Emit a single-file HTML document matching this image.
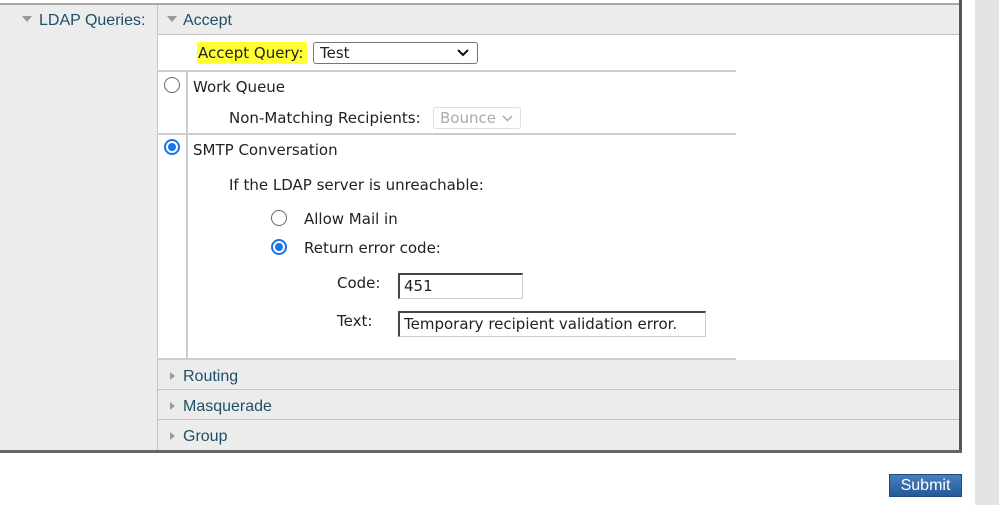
<!DOCTYPE html>
<html><head><meta charset="utf-8"><style>
*{margin:0;padding:0;box-sizing:border-box}
body{width:999px;height:505px;background:#fff;position:relative;overflow:hidden;font-family:"DejaVu Sans","Liberation Sans",sans-serif;font-size:15px;color:#222}
.a{position:absolute;white-space:nowrap}
.hdr{position:absolute;left:158px;width:801px;background:#ececec;border-bottom:1px solid #c4c4c4;color:#1f4f66;font-family:"Liberation Sans",sans-serif;font-size:16px}
.tri{display:inline-block;width:0;height:0;border-top:4px solid transparent;border-bottom:4px solid transparent;border-left:5px solid #999;margin:0 8px 0 12px;vertical-align:1px}
.rad{position:absolute;width:16px;height:16px;border-radius:50%;border:1px solid #666;background:#fff}
.rad.on{border:2px solid #1a73e8}
.rad.on::after{content:"";position:absolute;left:2px;top:2px;width:8px;height:8px;border-radius:50%;background:#1a73e8}
.inp{position:absolute;border:1px solid #ccc;border-top:2px solid #444;border-left:2px solid #444;background:#fff;padding-left:4px;font-size:15px;line-height:22px}
</style></head><body>
<div class="a" style="left:0;top:3px;width:961px;height:2px;background:#a8a8a8"></div>
<div class="a" style="left:0;top:5px;width:157px;height:446px;background:#ececec"></div>
<div class="a" style="left:157px;top:5px;width:1px;height:446px;background:#c4c4c4"></div>
<div class="a" style="left:959px;top:0;width:3px;height:453px;background:#555"></div>
<div class="a" style="left:0;top:450px;width:962px;height:3px;background:#666"></div>
<div class="a" style="left:975px;top:0;width:24px;height:505px;background:#e3e3e3"></div>
<div class="a" style="left:22px;top:12px;color:#1f4f66;font-family:'Liberation Sans',sans-serif;font-size:16px"><span style="display:inline-block;border-left:5px solid transparent;border-right:5px solid transparent;border-top:6px solid #999;margin-right:7px;vertical-align:3px"></span>LDAP Queries:</div>
<div class="hdr" style="top:5px;height:30px;line-height:32px"><span class="tri" style="border:none;border-left:5px solid transparent;border-right:5px solid transparent;border-top:6px solid #999;margin:0 6px 0 9px;vertical-align:3px"></span>Accept</div>
<div class="a" style="left:197px;top:42px;width:110px;height:22px;background:#ffff33"></div>
<div class="a" style="left:198px;top:44px">Accept Query:</div>
<div class="a" style="left:313px;top:42px;width:165px;height:22px;border:1px solid #767676;border-radius:3px;padding-left:6px;line-height:20px">Test<svg style="position:absolute;right:8px;top:6px" width="12" height="8"><path d="M1 1l5 5 5-5" fill="none" stroke="#111" stroke-width="2"/></svg></div>
<div class="a" style="left:158px;top:70px;width:578px;height:2px;background:#ccc"></div>
<div class="a" style="left:186px;top:72px;width:2px;height:287px;background:#ccc"></div>
<div class="rad" style="left:164px;top:77px"></div>
<div class="a" style="left:193px;top:78px">Work Queue</div>
<div class="a" style="left:229px;top:109px">Non-Matching Recipients:</div>
<div class="a" style="left:433px;top:107px;width:88px;height:22px;border:1px solid #e0e0e0;border-radius:3px;padding-left:6px;line-height:20px;color:#aaa">Bounce<svg style="position:absolute;right:7px;top:7px" width="11" height="7"><path d="M1 1l4.5 4.5 4.5-4.5" fill="none" stroke="#aaa" stroke-width="1.5"/></svg></div>
<div class="a" style="left:158px;top:133px;width:578px;height:2px;background:#ccc"></div>
<div class="rad on" style="left:164px;top:139px"></div>
<div class="a" style="left:193px;top:141px">SMTP Conversation</div>
<div class="a" style="left:229px;top:176px">If the LDAP server is unreachable:</div>
<div class="rad" style="left:271px;top:210px"></div>
<div class="a" style="left:304px;top:210px">Allow Mail in</div>
<div class="rad on" style="left:271px;top:239px"></div>
<div class="a" style="left:304px;top:239px">Return error code:</div>
<div class="a" style="left:337px;top:274px">Code:</div>
<div class="inp" style="left:398px;top:273px;width:125px;height:26px">451</div>
<div class="a" style="left:337px;top:312px">Text:</div>
<div class="inp" style="left:398px;top:311px;width:308px;height:26px">Temporary recipient validation error.</div>
<div class="a" style="left:158px;top:358px;width:578px;height:2px;background:#ccc"></div>
<div class="hdr" style="top:360px;height:30px;line-height:33px"><span class="tri"></span>Routing</div>
<div class="hdr" style="top:390px;height:30px;line-height:33px"><span class="tri"></span>Masquerade</div>
<div class="hdr" style="top:420px;height:30px;line-height:33px;border-bottom:none"><span class="tri"></span>Group</div>
<div class="a" style="left:889px;top:474px;width:73px;height:23px;background:linear-gradient(#4a7fbf,#245a99);border:1px solid #1d4a80;color:#fff;font-family:'Liberation Sans',sans-serif;font-size:16px;line-height:22px;text-align:center">Submit</div>
</body></html>
